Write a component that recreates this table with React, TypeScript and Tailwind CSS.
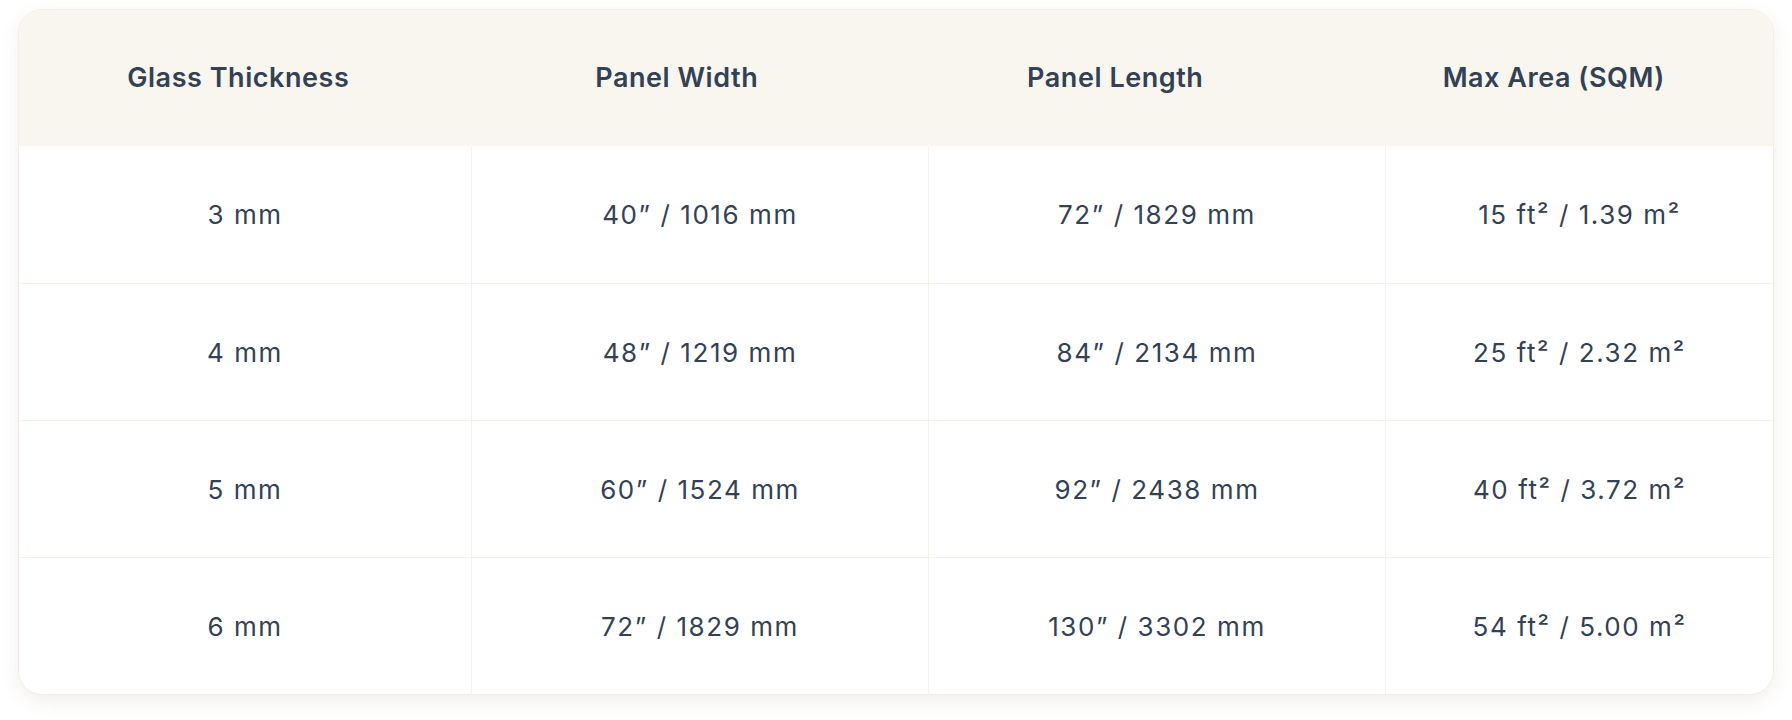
import React from "react";

const headers = ["Glass Thickness", "Panel Width", "Panel Length", "Max Area (SQM)"];
const rows = [
  ["3 mm", "40” / 1016 mm", "72” / 1829 mm", "15 ft² / 1.39 m²"],
  ["4 mm", "48” / 1219 mm", "84” / 2134 mm", "25 ft² / 2.32 m²"],
  ["5 mm", "60” / 1524 mm", "92” / 2438 mm", "40 ft² / 3.72 m²"],
  ["6 mm", "72” / 1829 mm", "130” / 3302 mm", "54 ft² / 5.00 m²"],
];

export default function App() {
  return (
    <div className="min-h-[720px] w-full bg-white px-[18px] pt-[9px]" style={{ fontFamily: "Inter, 'Noto Sans', sans-serif" }}>
      <div className="overflow-hidden rounded-[24px] border border-[#f3efe7] bg-white shadow-[0_6px_18px_rgba(120,100,60,0.10)]">
        <div className="grid h-[136px] grid-cols-4 items-center bg-[#f9f6f0]">
          {headers.map((h) => (
            <div key={h} className="text-center text-[27px] font-semibold tracking-[0.02em] text-[#334155]">
              {h}
            </div>
          ))}
        </div>
        {rows.map((r, i) => (
          <div
            key={i}
            className={`grid h-[137px] grid-cols-[452px_457px_457px_1fr] ${i > 0 ? "border-t border-[#f6f2ea]" : ""}`}
          >
            {r.map((c, j) => (
              <div
                key={j}
                className={`flex items-center justify-center text-[26px] tracking-[0.06em] text-[#334155] ${j > 0 ? "border-l border-[#f6f2ea]" : ""}`}
              >
                {c}
              </div>
            ))}
          </div>
        ))}
      </div>
    </div>
  );
}
